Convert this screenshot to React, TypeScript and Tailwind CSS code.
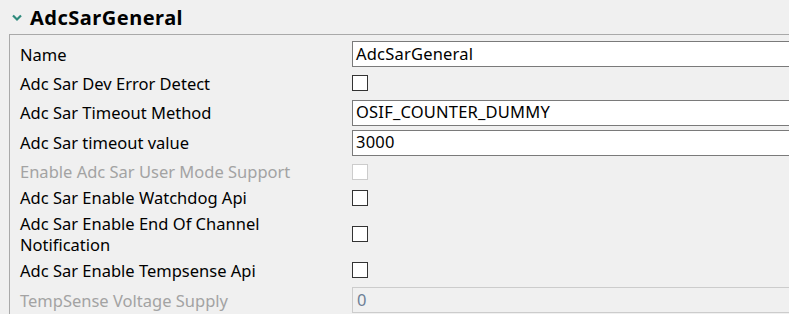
import React from "react";

type Row = {
  label: string[];
  kind: "text" | "check";
  value?: string;
  disabled?: boolean;
  h: string;
};

const rows: Row[] = [
  { label: ["Name"], kind: "text", value: "AdcSarGeneral", h: "h-[28px]" },
  { label: ["Adc Sar Dev Error Detect"], kind: "check", h: "h-[30px]" },
  { label: ["Adc Sar Timeout Method"], kind: "text", value: "OSIF_COUNTER_DUMMY", h: "h-[29px]" },
  { label: ["Adc Sar timeout value"], kind: "text", value: "3000", h: "h-[31px]" },
  { label: ["Enable Adc Sar User Mode Support"], kind: "check", disabled: true, h: "h-[27px]" },
  { label: ["Adc Sar Enable Watchdog Api"], kind: "check", h: "h-[25px]" },
  { label: ["Adc Sar Enable End Of Channel", "Notification"], kind: "check", h: "h-[48px]" },
  { label: ["Adc Sar Enable Tempsense Api"], kind: "check", h: "h-[24px]" },
  { label: ["TempSense Voltage Supply"], kind: "text", value: "0", disabled: true, h: "h-[36px]" },
];

function Field({ row }: { row: Row }) {
  if (row.kind === "check") {
    return (
      <div
        className={
          row.disabled
            ? "h-4 w-4 border border-[#cccccc] bg-white"
            : "h-4 w-4 border border-[#333333] bg-white"
        }
      />
    );
  }
  return (
    <div
      className={
        row.disabled
          ? "flex h-[26px] w-full items-center border border-[#cccccc] bg-[#f0f0f0] pl-[4px] tracking-[0.2px] text-[#6d7f96]"
          : "flex h-[26px] w-full items-center border border-[#7a7a7a] bg-white pl-[3px] tracking-[0.2px] text-black"
      }
    >
      {row.value}
    </div>
  );
}

export default function App() {
  return (
    <div className="h-[314px] w-[789px] overflow-hidden bg-[#f0f0f0] font-['Noto_Sans',sans-serif] text-[16.5px]">
      <div className="flex h-[34px] items-center pl-[12px] pt-[1px]">
        <svg width="10" height="8" viewBox="0 0 10 8" className="mr-[8px]">
          <polyline points="1,1.5 5,5.5 9,1.5" fill="none" stroke="#2e8a7c" strokeWidth="2.2" />
        </svg>
        <span className="text-[20px] font-bold tracking-[0.5px] text-black">AdcSarGeneral</span>
      </div>
      <div className="ml-[9px] w-[800px] border-l border-t border-[#a9a9a9] pt-[5px]">
        {rows.map((row) => (
          <div key={row.label.join(" ")} className={`flex items-center ${row.h}`}>
            <div
              className={`w-[342px] shrink-0 pl-[10px] leading-[21px] ${
                row.disabled ? "text-[#a3a3a3]" : "text-black"
              }`}
            >
              {row.label.map((l) => (
                <div key={l}>{l}</div>
              ))}
            </div>
            <div className="flex flex-1 items-center">
              <Field row={row} />
            </div>
          </div>
        ))}
      </div>
    </div>
  );
}
